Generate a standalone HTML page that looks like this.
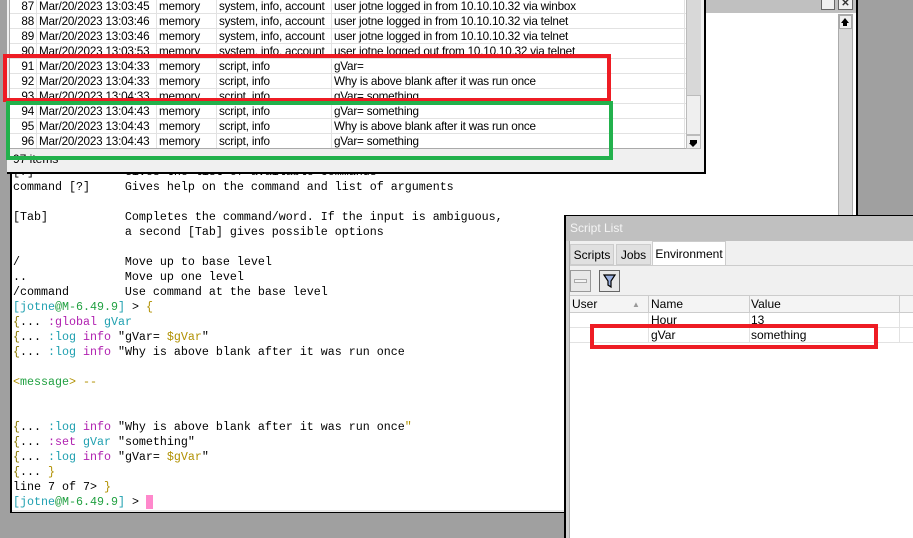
<!DOCTYPE html>
<html><head><meta charset="utf-8"><style>
*{margin:0;padding:0;box-sizing:border-box}
body{width:913px;height:538px;background:#a0a0a0;position:relative;overflow:hidden;font-family:"Liberation Sans",sans-serif}
.a{position:absolute}
.term{font-family:"Liberation Mono",monospace;font-size:11.67px;line-height:15px;white-space:pre;color:#000}
.t{color:#1fa0b0}.g{color:#20a040}.m{color:#b020b0}.y{color:#b09000}.o{color:#8a7a00}
.row{position:absolute;left:0;width:684px;height:15px;border-bottom:1px solid #e2e2e2;font-size:11.7px;letter-spacing:-0.2px;line-height:15px;color:#000;background:#fff}
.row span{position:absolute;top:0}
</style></head><body>
<div class="a" style="left:10px;top:0;width:848px;height:513px;background:#fff;border-left:2px solid #000;border-right:2px solid #000;border-bottom:2px solid #000"></div>
<div class="a" style="left:12px;top:0;width:844px;height:13px;background:#c0c0c0"></div>
<div class="a" style="left:821px;top:0;width:14px;height:10px;background:#f0f0f0;border:1px solid #666;border-top:none"></div>
<div class="a" style="left:838px;top:0;width:15px;height:10px;background:#f0f0f0;border:1px solid #666;border-top:none;font-size:10px;line-height:8px;text-align:center;font-weight:bold;color:#333">✕</div>
<div class="a" style="left:838px;top:14px;width:15px;height:499px;background:#d8d8d8;border:1px solid #aaa"></div>
<div class="a" style="left:839px;top:15px;width:13px;height:14px;background:#f0f0f0;border:1px solid #aaa"></div>
<div class="a" style="left:841px;top:18px;width:0;height:0;border-left:4px solid transparent;border-right:4px solid transparent;border-bottom:5px solid #000"></div>
<div class="a" style="left:843px;top:23px;width:4px;height:3px;background:#000"></div>
<div class="a" style="left:12px;top:510px;width:553px;height:2px;background:#e8e8e8"></div>

<div class="a term" style="left:13px;top:165px">[?]             Gives the list of available commands
command [?]     Gives help on the command and list of arguments

[Tab]           Completes the command/word. If the input is ambiguous,
                a second [Tab] gives possible options

/               Move up to base level
..              Move up one level
/command        Use command at the base level
<span class="t">[jotne</span><span class="g">@M-6.49.9</span><span class="t">]</span> &gt; <span class="y">{</span>
<span class="o">{</span>... <span class="m">:global</span> <span class="t">gVar</span>
<span class="o">{</span>... <span class="t">:log</span> <span class="m">info</span> "gVar= <span class="y">$gVar</span>"
<span class="o">{</span>... <span class="t">:log</span> <span class="m">info</span> "Why is above blank after it was run once

<span class="y">&lt;</span><span class="g">message</span><span class="y">&gt; --</span>


<span class="o">{</span>... <span class="t">:log</span> <span class="m">info</span> "Why is above blank after it was run once<span class="y">"</span>
<span class="o">{</span>... <span class="m">:set</span> <span class="t">gVar</span> "something"
<span class="o">{</span>... <span class="t">:log</span> <span class="m">info</span> "gVar= <span class="y">$gVar</span>"
<span class="o">{</span>... <span class="y">}</span>
line 7 of 7&gt; <span class="y">}</span>
<span class="t">[jotne</span><span class="g">@M-6.49.9</span><span class="t">]</span> &gt; <span style="background:#ff88cc"> </span></div>

<div class="a" style="left:0;top:0;width:706px;height:174px;background:#f0f0f0;border-right:2px solid #000;border-bottom:2px solid #000"></div>
<div class="a" style="left:9px;top:0;width:677px;height:149px;background:#fff;border-left:1px solid #aaa;border-bottom:1px solid #aaa;overflow:hidden">
<div id="rows"></div>
</div>
<div class="a" style="left:0;top:0;width:7px;height:174px;background:#a0a0a0"></div>
<div class="a" style="left:686px;top:0;width:15px;height:149px;background:#d8d8d8;border-left:1px solid #bbb"></div>
<div class="a" style="left:686px;top:95px;width:15px;height:40px;background:#efefef;border:1px solid #bbb"></div>
<div class="a" style="left:686px;top:135px;width:15px;height:14px;background:#efefef;border:1px solid #bbb"></div>
<div class="a" style="left:690px;top:140px;width:7px;height:3px;background:#000"></div>
<div class="a" style="left:689px;top:143px;width:0;height:0;border-left:4px solid transparent;border-right:4px solid transparent;border-top:4px solid #000"></div>
<div class="a" style="left:13px;top:152px;font-size:12px;color:#000">97 items</div>

<div class="a" style="left:564px;top:215px;width:349px;height:323px;background:#fff;border-left:2px solid #000;border-top:1px solid #000"></div>
<div class="a" style="left:566px;top:216px;width:347px;height:25px;background:#c0c0c0;color:#f4f4f4;font-size:12px;line-height:25px;padding-left:4px">Script List</div>
<div class="a" style="left:566px;top:241px;width:4px;height:297px;background:#d0d0d0;border-right:1px solid #aaa"></div>
<div class="a" style="left:570px;top:241px;width:343px;height:56px;background:#f0f0f0"></div>
<div class="a" style="left:570px;top:244px;width:44px;height:21px;background:#e0e0e0;border:1px solid #ccc;font-size:12px;line-height:21px;text-align:center">Scripts</div>
<div class="a" style="left:616px;top:244px;width:35px;height:21px;background:#e0e0e0;border:1px solid #ccc;font-size:12px;line-height:21px;text-align:center">Jobs</div>
<div class="a" style="left:652px;top:241px;width:74px;height:25px;background:#fff;border:1px solid #ccc;border-bottom:none;font-size:12px;line-height:24px;text-align:center">Environment</div>
<div class="a" style="left:570px;top:265px;width:343px;height:1px;background:#ccc"></div>
<div class="a" style="left:570px;top:270px;width:21px;height:22px;background:#e8e8e8;border:1px solid #999"></div>
<div class="a" style="left:574px;top:279px;width:13px;height:4px;border:1px solid #aaa;background:#f4f4f4"></div>
<div class="a" style="left:599px;top:270px;width:21px;height:22px;background:#e8e8e8;border:1px solid #666"></div>
<svg class="a" style="left:602px;top:273px" width="15" height="16"><path d="M2 2H13L9 8V14L6 12V8Z" fill="#9ab0e0" stroke="#000" stroke-width="1.2"/></svg>
<div class="a" style="left:570px;top:295px;width:343px;height:18px;background:#f4f4f4;border-top:1px solid #ccc;border-bottom:1px solid #ccc;font-size:12px;line-height:17px">
<span class="a" style="left:2px">User</span><span class="a" style="left:62px;color:#999;font-size:8px">▲</span>
<span class="a" style="left:78px;top:-1px;width:1px;height:18px;background:#ccc"></span><span class="a" style="left:81px">Name</span>
<span class="a" style="left:179px;top:-1px;width:1px;height:18px;background:#ccc"></span><span class="a" style="left:181px">Value</span>
<span class="a" style="left:329px;top:-1px;width:1px;height:18px;background:#ccc"></span></div>
<div class="a" style="left:570px;top:313px;width:343px;height:15px;border-bottom:1px solid #e2e2e2;font-size:12px;line-height:14px"><span class="a" style="left:81px">Hour</span><span class="a" style="left:181px">13</span></div>
<div class="a" style="left:570px;top:328px;width:343px;height:15px;border-bottom:1px solid #e2e2e2;font-size:12px;line-height:14px"><span class="a" style="left:81px">gVar</span><span class="a" style="left:181px">something</span></div>
<div class="a" style="left:648px;top:313px;width:1px;height:30px;background:#e2e2e2"></div>
<div class="a" style="left:749px;top:313px;width:1px;height:30px;background:#e2e2e2"></div>
<div class="a" style="left:899px;top:313px;width:1px;height:30px;background:#e2e2e2"></div>

<div class="a" style="left:590px;top:324px;width:288px;height:25px;border:4px solid #ee1c24"></div>
<div class="a" style="left:3px;top:54px;width:608px;height:48px;border:4px solid #ee1c24"></div>
<div class="a" style="left:6px;top:101px;width:607px;height:59px;border:4px solid #22b14c"></div>

<script>
var d=[[87,"13:03:45","system, info, account","user jotne logged in from 10.10.10.32 via winbox"],
[88,"13:03:46","system, info, account","user jotne logged in from 10.10.10.32 via telnet"],
[89,"13:03:46","system, info, account","user jotne logged in from 10.10.10.32 via telnet"],
[90,"13:03:53","system, info, account","user jotne logged out from 10.10.10.32 via telnet"],
[91,"13:04:33","script, info","gVar="],
[92,"13:04:33","script, info","Why is above blank after it was run once"],
[93,"13:04:33","script, info","gVar= something"],
[94,"13:04:43","script, info","gVar= something"],
[95,"13:04:43","script, info","Why is above blank after it was run once"],
[96,"13:04:43","script, info","gVar= something"]];
var h="";d.forEach(function(r,i){h+='<div class="row" style="top:'+(i*15-1)+'px"><span style="left:0;width:24px;text-align:right">'+r[0]+'</span><span style="left:26px;width:1px;height:15px;background:#e2e2e2"></span><span style="left:29px">Mar/20/2023 '+r[1]+'</span><span style="left:146px;width:1px;height:15px;background:#e2e2e2"></span><span style="left:149px">memory</span><span style="left:206px;width:1px;height:15px;background:#e2e2e2"></span><span style="left:209px">'+r[2]+'</span><span style="left:321px;width:1px;height:15px;background:#e2e2e2"></span><span style="left:324px">'+r[3]+'</span><span style="left:674px;width:1px;height:15px;background:#e2e2e2"></span></div>'});
document.getElementById("rows").innerHTML=h;
</script>
</body></html>
